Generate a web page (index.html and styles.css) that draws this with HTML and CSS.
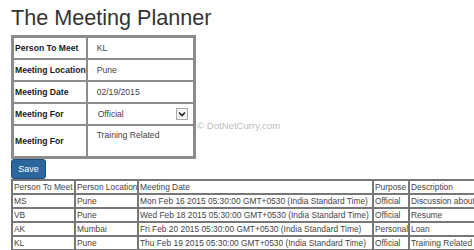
FILE: index.html
```html
<!DOCTYPE html>
<html>
<head>
<meta charset="utf-8">
<link rel="stylesheet" href="styles.css">
</head>
<body>
<div class="page">
  <h1 class="title">The Meeting Planner</h1>
  <table class="form">
    <tr class="r"><td class="lbl">Person To Meet</td><td class="val">KL</td></tr>
    <tr class="r"><td class="lbl">Meeting Location</td><td class="val">Pune</td></tr>
    <tr class="r"><td class="lbl">Meeting Date</td><td class="val">02/19/2015</td></tr>
    <tr class="r"><td class="lbl">Meeting For</td><td class="val">
      <div class="select"><span>Official</span><span class="arrow"><svg width="8" height="6" viewBox="0 0 8 6"><path d="M1 1.5 L4 4.5 L7 1.5" fill="none" stroke="#222" stroke-width="1.6"/></svg></span></div>
    </td></tr>
    <tr class="r5"><td class="lbl">Meeting For</td><td class="val top">Training Related</td></tr>
  </table>
  <div class="watermark">© DotNetCurry.com</div>
  <button class="save">Save</button>
  <table class="data">
    <colgroup><col class="c1"><col class="c2"><col class="c3"><col class="c4"><col class="c5"></colgroup>
    <tr><td>Person To Meet</td><td>Person Location</td><td>Meeting Date</td><td>Purpose</td><td>Description</td></tr>
    <tr><td>MS</td><td>Pune</td><td>Mon Feb 16 2015 05:30:00 GMT+0530 (India Standard Time)</td><td>Official</td><td>Discussion about</td></tr>
    <tr><td>VB</td><td>Pune</td><td>Wed Feb 18 2015 05:30:00 GMT+0530 (India Standard Time)</td><td>Official</td><td>Resume</td></tr>
    <tr><td>AK</td><td>Mumbai</td><td>Fri Feb 20 2015 05:30:00 GMT+0530 (India Standard Time)</td><td>Personal</td><td>Loan</td></tr>
    <tr><td>KL</td><td>Pune</td><td>Thu Feb 19 2015 05:30:00 GMT+0530 (India Standard Time)</td><td>Official</td><td>Training Related</td></tr>
  </table>
</div>
</body>
</html>
```
FILE: styles.css
```css
html, body {
  margin: 0;
  padding: 0;
  background: #fff;
  overflow: hidden;
}
body {
  font-family: "Liberation Sans", Arial, sans-serif;
  width: 474px;
  height: 250px;
}
.page {
  position: relative;
  padding: 5px 0 0 11px;
}
.title {
  margin: 0 0 5px 0;
  font-size: 21.6px;
  line-height: 25px;
  font-weight: normal;
  color: #333;
}
.form {
  border-collapse: collapse;
  border: 3px solid #8c8c8c;
  width: 185px;
}
.form td {
  border: 2px solid #8c8c8c;
  padding: 0;
  font-size: 8.6px;
}
.form .r td {
  height: 20px;
}
.form .r5 td {
  height: 26px;
}
.lbl {
  width: 68px;
  font-weight: bold;
  color: #1a1a1a;
  padding-left: 1px !important;
  white-space: nowrap;
}
.val {
  color: #444;
  padding-left: 9px !important;
}
.val.top {
  vertical-align: top;
  padding-top: 4px !important;
}
.select {
  display: flex;
  align-items: center;
  justify-content: space-between;
  padding-left: 1px;
  padding-right: 5px;
}
.arrow {
  width: 10px;
  height: 10px;
  border: 1px solid #aaa;
  background: #f4f4f4;
  display: flex;
  align-items: center;
  justify-content: center;
}
.watermark {
  position: absolute;
  left: 197px;
  top: 120px;
  font-size: 9.6px;
  color: #bdbdbd;
  white-space: nowrap;
}
.save {
  display: block;
  margin: 0;
  width: 35px;
  height: 20px;
  padding: 0;
  background: #2b679c;
  border: 1px solid #1d4f7c;
  border-radius: 3px;
  color: #fff;
  font-family: "Liberation Sans", Arial, sans-serif;
  font-size: 9px;
}
.data {
  margin-top: 0;
  border-collapse: collapse;
  table-layout: fixed;
  width: 520px;
  border: 2px solid #777;
}
.data td {
  border: 2px solid #777;
  padding: 0 0 0 1px;
  font-size: 8.4px;
  line-height: 12px;
  color: #444;
  white-space: nowrap;
  overflow: hidden;
}
.c1 { width: 63px; }
.c2 { width: 63px; }
.c3 { width: 235px; }
.c4 { width: 36px; }
.c5 { width: 123px; }
```
